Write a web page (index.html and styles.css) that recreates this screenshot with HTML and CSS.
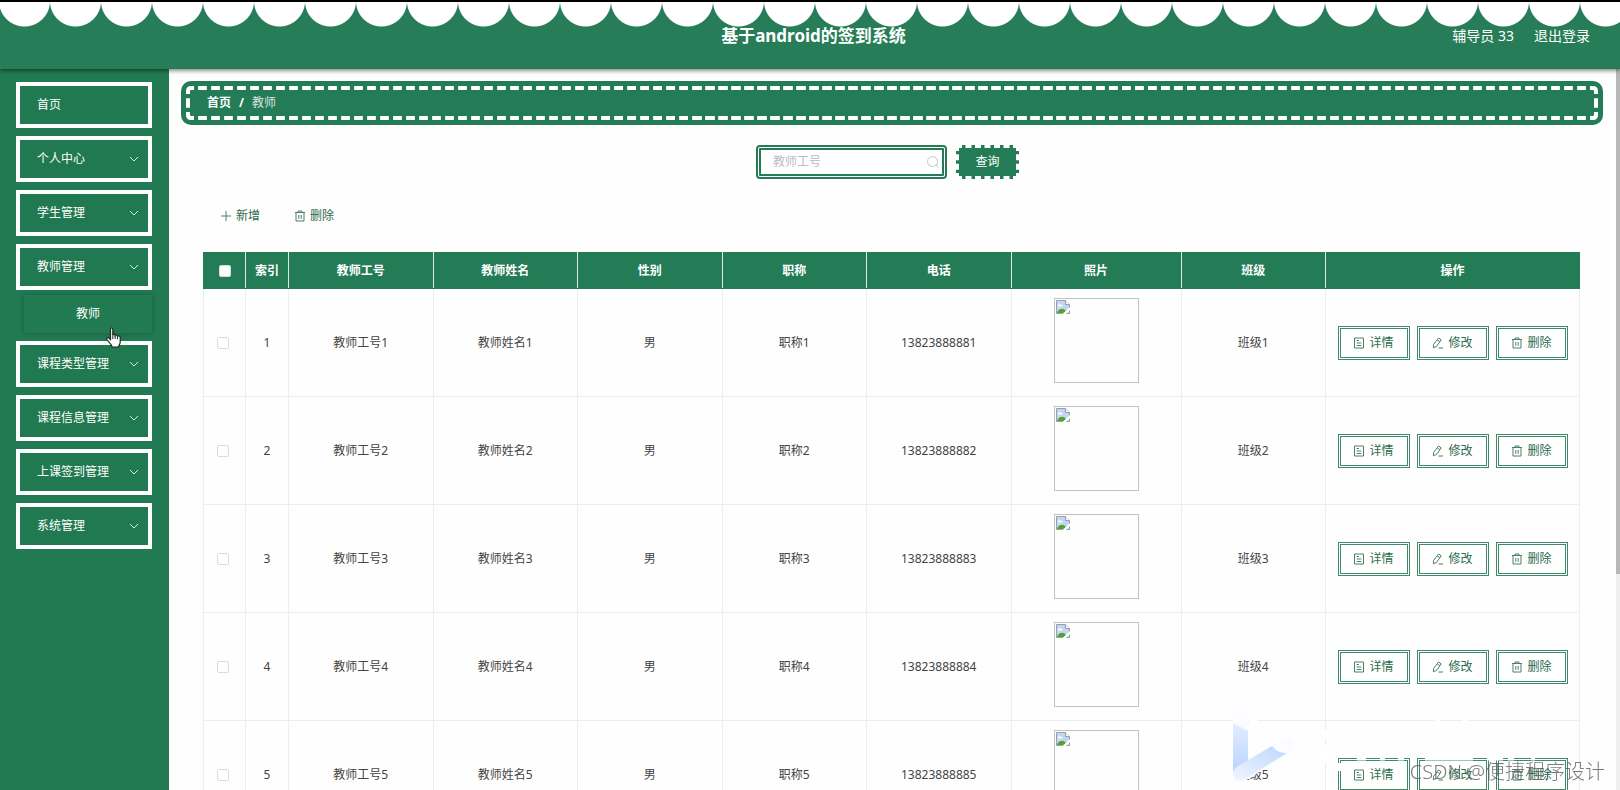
FILE: index.html
```
<!DOCTYPE html>
<html lang="zh-CN">
<head>
    <meta charset="UTF-8">
    <meta name="viewport" content="width=device-width, initial-scale=1.0">
    <title>基于android的签到系统</title>
    <link rel="stylesheet" href="styles.css">
</head>
<body>
    <!-- 图标 -->
    <svg class="sprite" aria-hidden="true">
        <symbol id="i-down" viewBox="0 0 12 12"><path d="M2 4l4 4 4-4"/></symbol>
        <symbol id="i-search" viewBox="0 0 14 14"><circle cx="6.5" cy="6.5" r="5"/><path d="M10 10l2.500 2.500"/></symbol>
        <symbol id="i-plus" viewBox="0 0 12 12"><path d="M6 1v10M1 6h10"/></symbol>
        <symbol id="i-trash" viewBox="0 0 12 12"><path d="M1 2.5h10M4 2.5v-1.500h4v1.500M2 2.500v8.500h8v-8.500M4.800 5v3.800M7.200 5v3.800"/></symbol>
        <symbol id="i-doc" viewBox="0 0 12 12"><path d="M1.500 1h9v10h-9zM3.700 3.500h2.300M3.700 6h4.600M3.700 8.500h4.600"/></symbol>
        <symbol id="i-edit" viewBox="0 0 12 12"><path d="M6.500 1l2.700 1.800-4.700 6.700-3.200 1.200.3-3.200zM5.200 2.900l2.700 1.800M6.500 11h4.500"/></symbol>
        <symbol id="i-broken" viewBox="0 0 14 14">
            <path d="M.5.5h9l4 4v9H.5z" fill="#c3d5f3" stroke="#9a9fa5"/>
            <path d="M9.500.5v4h4" fill="#fff" stroke="#9a9fa5"/>
            <path d="M2 6c0-2 3-2.500 3.500-1C7 5 7 6.500 6 6.500H2z" fill="#fff" stroke="none"/>
            <path d="M1 13c1-4 6-6 9-2l1 2z" fill="#4ea42e" stroke="none"/>
            <path d="M6.500 14L14 7v3l-4 4z" fill="#fff" stroke="none"/>
        </symbol>
    </svg>

    <header class="header">
        <h1 class="header-title">基于android的签到系统</h1>
        <div class="header-user">
            <span>辅导员 33</span>
            <a href="#">退出登录</a>
        </div>
    </header>

    <div class="layout">
        <nav class="sidebar">
            <ul class="menu">
                <li><button class="menu-item">首页</button></li>
                <li><button class="menu-item">个人中心<svg class="icon"><use href="#i-down"/></svg></button></li>
                <li><button class="menu-item">学生管理<svg class="icon"><use href="#i-down"/></svg></button></li>
                <li>
                    <button class="menu-item">教师管理<svg class="icon"><use href="#i-down"/></svg></button>
                    <a class="submenu-item" href="#">教师</a>
                </li>
                <li><button class="menu-item">课程类型管理<svg class="icon"><use href="#i-down"/></svg></button></li>
                <li><button class="menu-item">课程信息管理<svg class="icon"><use href="#i-down"/></svg></button></li>
                <li><button class="menu-item">上课签到管理<svg class="icon"><use href="#i-down"/></svg></button></li>
                <li><button class="menu-item">系统管理<svg class="icon"><use href="#i-down"/></svg></button></li>
            </ul>
        </nav>

        <main class="main">
            <div class="breadcrumb">
                <a href="#">首页</a>
                <b>/</b>
                <span>教师</span>
            </div>

            <form class="search">
                <div class="search-box">
                    <input type="text" placeholder="教师工号" aria-label="教师工号">
                    <svg class="icon"><use href="#i-search"/></svg>
                </div>
                <button class="search-btn" type="button">查询</button>
            </form>

            <div class="toolbar">
                <button class="text-btn"><svg class="icon"><use href="#i-plus"/></svg>新增</button>
                <button class="text-btn"><svg class="icon"><use href="#i-trash"/></svg>删除</button>
            </div>

            <table class="table">
                <colgroup>
                    <col class="col-check">
                    <col class="col-index">
                    <col><col><col><col><col>
                    <col class="col-photo">
                    <col>
                    <col class="col-action">
                </colgroup>
                <thead>
                    <tr>
                        <th><input type="checkbox" aria-label="全选"></th>
                        <th>索引</th>
                        <th>教师工号</th>
                        <th>教师姓名</th>
                        <th>性别</th>
                        <th>职称</th>
                        <th>电话</th>
                        <th>照片</th>
                        <th>班级</th>
                        <th>操作</th>
                    </tr>
                </thead>
                <tbody>
                    <tr>
                        <td class="check-cell"><input type="checkbox" aria-label="选择1"></td>
                        <td>1</td>
                        <td>教师工号1</td>
                        <td>教师姓名1</td>
                        <td>男</td>
                        <td>职称1</td>
                        <td>13823888881</td>
                        <td class="photo-cell"><div class="photo"><svg><use href="#i-broken"/></svg></div></td>
                        <td>班级1</td>
                        <td>
                            <div class="actions">
                                <button class="row-btn"><svg class="icon"><use href="#i-doc"/></svg>详情</button>
                                <button class="row-btn"><svg class="icon"><use href="#i-edit"/></svg>修改</button>
                                <button class="row-btn"><svg class="icon"><use href="#i-trash"/></svg>删除</button>
                            </div>
                        </td>
                    </tr>
                    <tr>
                        <td class="check-cell"><input type="checkbox" aria-label="选择2"></td>
                        <td>2</td>
                        <td>教师工号2</td>
                        <td>教师姓名2</td>
                        <td>男</td>
                        <td>职称2</td>
                        <td>13823888882</td>
                        <td class="photo-cell"><div class="photo"><svg><use href="#i-broken"/></svg></div></td>
                        <td>班级2</td>
                        <td>
                            <div class="actions">
                                <button class="row-btn"><svg class="icon"><use href="#i-doc"/></svg>详情</button>
                                <button class="row-btn"><svg class="icon"><use href="#i-edit"/></svg>修改</button>
                                <button class="row-btn"><svg class="icon"><use href="#i-trash"/></svg>删除</button>
                            </div>
                        </td>
                    </tr>
                    <tr>
                        <td class="check-cell"><input type="checkbox" aria-label="选择3"></td>
                        <td>3</td>
                        <td>教师工号3</td>
                        <td>教师姓名3</td>
                        <td>男</td>
                        <td>职称3</td>
                        <td>13823888883</td>
                        <td class="photo-cell"><div class="photo"><svg><use href="#i-broken"/></svg></div></td>
                        <td>班级3</td>
                        <td>
                            <div class="actions">
                                <button class="row-btn"><svg class="icon"><use href="#i-doc"/></svg>详情</button>
                                <button class="row-btn"><svg class="icon"><use href="#i-edit"/></svg>修改</button>
                                <button class="row-btn"><svg class="icon"><use href="#i-trash"/></svg>删除</button>
                            </div>
                        </td>
                    </tr>
                    <tr>
                        <td class="check-cell"><input type="checkbox" aria-label="选择4"></td>
                        <td>4</td>
                        <td>教师工号4</td>
                        <td>教师姓名4</td>
                        <td>男</td>
                        <td>职称4</td>
                        <td>13823888884</td>
                        <td class="photo-cell"><div class="photo"><svg><use href="#i-broken"/></svg></div></td>
                        <td>班级4</td>
                        <td>
                            <div class="actions">
                                <button class="row-btn"><svg class="icon"><use href="#i-doc"/></svg>详情</button>
                                <button class="row-btn"><svg class="icon"><use href="#i-edit"/></svg>修改</button>
                                <button class="row-btn"><svg class="icon"><use href="#i-trash"/></svg>删除</button>
                            </div>
                        </td>
                    </tr>
                    <tr>
                        <td class="check-cell"><input type="checkbox" aria-label="选择5"></td>
                        <td>5</td>
                        <td>教师工号5</td>
                        <td>教师姓名5</td>
                        <td>男</td>
                        <td>职称5</td>
                        <td>13823888885</td>
                        <td class="photo-cell"><div class="photo"><svg><use href="#i-broken"/></svg></div></td>
                        <td>班级5</td>
                        <td>
                            <div class="actions">
                                <button class="row-btn"><svg class="icon"><use href="#i-doc"/></svg>详情</button>
                                <button class="row-btn"><svg class="icon"><use href="#i-edit"/></svg>修改</button>
                                <button class="row-btn"><svg class="icon"><use href="#i-trash"/></svg>删除</button>
                            </div>
                        </td>
                    </tr>
                </tbody>
            </table>
        </main>

        <div class="scrollbar"><div class="scrollbar-thumb"></div></div>
    </div>

    <!-- 鼠标指针 -->
    <svg class="cursor" viewBox="0 0 16 21" aria-hidden="true">
        <path d="M4.500 12.500V2.200c0-1.600 2.300-1.600 2.300 0V8c.4-1 2.300-.8 2.400.5.5-.9 2.200-.6 2.300.7.6-.8 2.700-.4 2.700 1.300v4.500c0 2-1.200 3-1.700 5H6.200C5.500 17.500 2.500 15 1 12.500c-.8-1.500 1-2.500 2-1.500z" fill="#fff" stroke="#1d2b25" stroke-width="1.200"/>
        <path d="M6.800 8v4M9.200 8.500v3.500M11.500 9.200v3" fill="none" stroke="#1d2b25"/>
    </svg>

    <!-- 水印 -->
    <div class="watermark">
        <svg class="watermark-logo" viewBox="0 0 375 80" aria-hidden="true">
            <defs>
                <linearGradient id="wm-a" x1="0" y1="0" x2="0" y2="1">
                    <stop offset="0" stop-color="#e3edff"/>
                    <stop offset="1" stop-color="#b9d3fd"/>
                </linearGradient>
                <linearGradient id="wm-b" x1="0" y1="1" x2="1" y2="0">
                    <stop offset="0" stop-color="#f0f5ff"/>
                    <stop offset="1" stop-color="#bdd6fd"/>
                </linearGradient>
            </defs>
            <path d="M11 8v56M11 64L57 35" fill="none" stroke="#fafcff" stroke-width="16" stroke-linecap="round"/>
            <path d="M3 13l15 8v35L3 63z" fill="url(#wm-a)"/>
            <path d="M3 63c0-3 2-5 5-7l34-20c4 5 8 7 15 7L15 69c-6 3-12 1-12-6z" fill="url(#wm-b)"/>
            <path d="M95 20v9M95 35v18M108 53v8M127 47h9M150 47h5M168 47h6M195 47h48M257 47h16M278 47h6M301 47h4M205 10h5M232 10h5M20 10h8" fill="none" stroke="#fff" stroke-width="7"/>
        </svg>
        <span class="watermark-text">CSDN @便捷程序设计</span>
    </div>
</body>
</html>
```
FILE: styles.css
```
* {
    box-sizing: border-box;
}
body {
    margin: 0;
    height: 100vh;
    display: flex;
    flex-direction: column;
    overflow: hidden;
    background: #fefefe;
    color: #444;
    font-family: "Noto Sans", "Noto Sans CJK SC", sans-serif;
    font-size: 12px;
    line-height: 20px;
}
button,
input {
    font: inherit;
}
button {
    cursor: pointer;
}
a {
    color: inherit;
    text-decoration: none;
}
.sprite {
    display: none;
}
.icon {
    width: 12px;
    height: 12px;
    flex: none;
    fill: none;
    stroke: currentColor;
    stroke-width: 1;
    opacity: 0.85;
}

/* header */
.header {
    position: relative;
    z-index: 2;
    flex: none;
    display: grid;
    grid-template-columns: 1fr auto 1fr;
    align-items: center;
    height: 69px;
    padding: 0 30px 0 37px;
    border-top: 2px solid #000;
    background: #267d58 radial-gradient(circle at 50% 0, #fff 25px, transparent 26px) -1px -1px / 51px 28px repeat-x;
    box-shadow: 0 1px 5px rgba(0, 0, 0, 0.6);
    color: #fff;
}
.header-title {
    grid-column: 2;
    margin: 0;
    font-size: 17px;
    line-height: 24px;
}
.header-user {
    display: flex;
    justify-content: flex-end;
    gap: 20px;
    font-size: 14px;
}

.layout {
    flex: 1;
    min-height: 0;
    display: flex;
}

/* sidebar */
.sidebar {
    flex: none;
    width: 169px;
    padding: 13px 17px 0 16px;
    background: #227a53;
    color: #fff;
}
.menu {
    margin: 0;
    padding: 0;
    list-style: none;
    display: grid;
    gap: 8px;
}
.menu-item {
    display: flex;
    align-items: center;
    justify-content: space-between;
    width: 100%;
    height: 46px;
    padding: 0 8px 0 17px;
    border: 4px solid #fff;
    background: #217951;
    color: #fff;
}
.submenu-item {
    display: block;
    margin: 5px 0 0 8px;
    line-height: 38px;
    text-align: center;
    box-shadow: 0 0 6px rgba(0, 0, 0, 0.25);
}

/* main */
.main {
    flex: 1;
    min-width: 0;
    overflow: hidden;
    padding: 17px 36px 0 34px;
}
.breadcrumb {
    display: flex;
    align-items: center;
    gap: 8px;
    height: 34px;
    margin: 0 -18px 0 -17px;
    padding: 0 17px;
    border: 4px solid transparent;
    border-image: url("data:image/svg+xml,%3Csvg xmlns='http://www.w3.org/2000/svg' width='33' height='33' fill='none' stroke='%23fff' stroke-width='4'%3E%3Cpath d='M8 2H5Q2 2 2 5V8M25 2H28Q31 2 31 5V8M8 31H5Q2 31 2 28V25M25 31H28Q31 31 31 28V25M12 2H21M12 31H21M2 12V21M31 12V21'/%3E%3C/svg%3E") 10 / 10px round;
    border-radius: 5px;
    background: #237c55;
    box-shadow: 0 0 0 5px #237c55;
    color: #dfe5e2;
}
.breadcrumb a,
.breadcrumb b {
    font-weight: bold;
    color: #fff;
}
.search {
    display: flex;
    justify-content: center;
    gap: 9px;
    margin-top: 25px;
    padding-right: 8px;
}
.search-box {
    display: flex;
    align-items: center;
    width: 191px;
    height: 34px;
    padding: 0 2px 0 12px;
    border: 5px double #237c55;
    border-radius: 4px;
    background: #fff;
    color: #b4bcc4;
}
.search-box input {
    flex: 1;
    min-width: 0;
    padding: 0;
    border: 0;
    outline: 0;
    background: none;
    color: #444;
}
.search-box input::placeholder {
    color: #b8bcc2;
}
.search-box .icon {
    width: 14px;
    height: 14px;
}
.search-btn {
    width: 63px;
    height: 34px;
    padding: 0;
    border: 3px dashed #fff;
    background: #237c55;
    color: #fff;
}
.toolbar {
    display: flex;
    gap: 34px;
    margin: 27px 0 26px;
    padding-left: 17px;
}
.text-btn {
    display: flex;
    align-items: center;
    gap: 4px;
    padding: 0;
    border: 0;
    background: none;
    color: #2c6b4c;
}

/* table */
.table {
    width: 100%;
    table-layout: fixed;
    border-collapse: collapse;
    text-align: center;
}
.col-check {
    width: 42px;
}
.col-index {
    width: 43px;
}
.col-photo {
    width: 170px;
}
.col-action {
    width: 254px;
}
.table th,
.table td {
    padding: 0;
    border: 1px solid #ebeef0;
}
.table th {
    height: 36px;
    border-color: #237c55 #dfeae5;
    background: #237c55;
    color: #fff;
}
.table th:first-child {
    border-left-color: #237c55;
}
.table th:last-child {
    border-right-color: #237c55;
}
.table td {
    height: 108px;
}
.table input {
    appearance: none;
    display: block;
    width: 12px;
    height: 12px;
    margin: 0 auto;
    border: 1px solid #d8dbe0;
    border-radius: 2px;
    background: #fff;
}
.table .check-cell {
    padding-right: 4px;
}
.table .photo-cell {
    padding-top: 9px;
    vertical-align: top;
}
.photo {
    width: 85px;
    height: 85px;
    margin: 0 auto;
    padding: 1px;
    border: 1px solid #c0c3c1;
}
.photo svg {
    display: block;
    width: 14px;
    height: 14px;
}
.actions {
    display: flex;
    justify-content: center;
    gap: 7px;
}
.row-btn {
    display: flex;
    align-items: center;
    justify-content: center;
    gap: 4px;
    width: 72px;
    height: 34px;
    padding: 0;
    border: 3px double #3f8a68;
    background: #fff;
    color: #2c6b4c;
}

.scrollbar {
    flex: none;
    width: 4px;
    background: #efefef;
}
.scrollbar-thumb {
    height: 70%;
    background: #b8b8b8;
}

.cursor {
    position: absolute;
    top: 327px;
    left: 106px;
    z-index: 3;
    width: 16px;
    height: 21px;
}

/* watermark */
.watermark {
    position: fixed;
    right: 15px;
    bottom: 0;
    z-index: 3;
    pointer-events: none;
}
.watermark-logo {
    display: block;
    width: 375px;
    height: 80px;
}
.watermark-text {
    position: absolute;
    right: 0;
    bottom: 4px;
    font-size: 20px;
    line-height: 28px;
    font-weight: 300;
    white-space: nowrap;
    color: rgba(90, 90, 90, 0.8);
}
```
